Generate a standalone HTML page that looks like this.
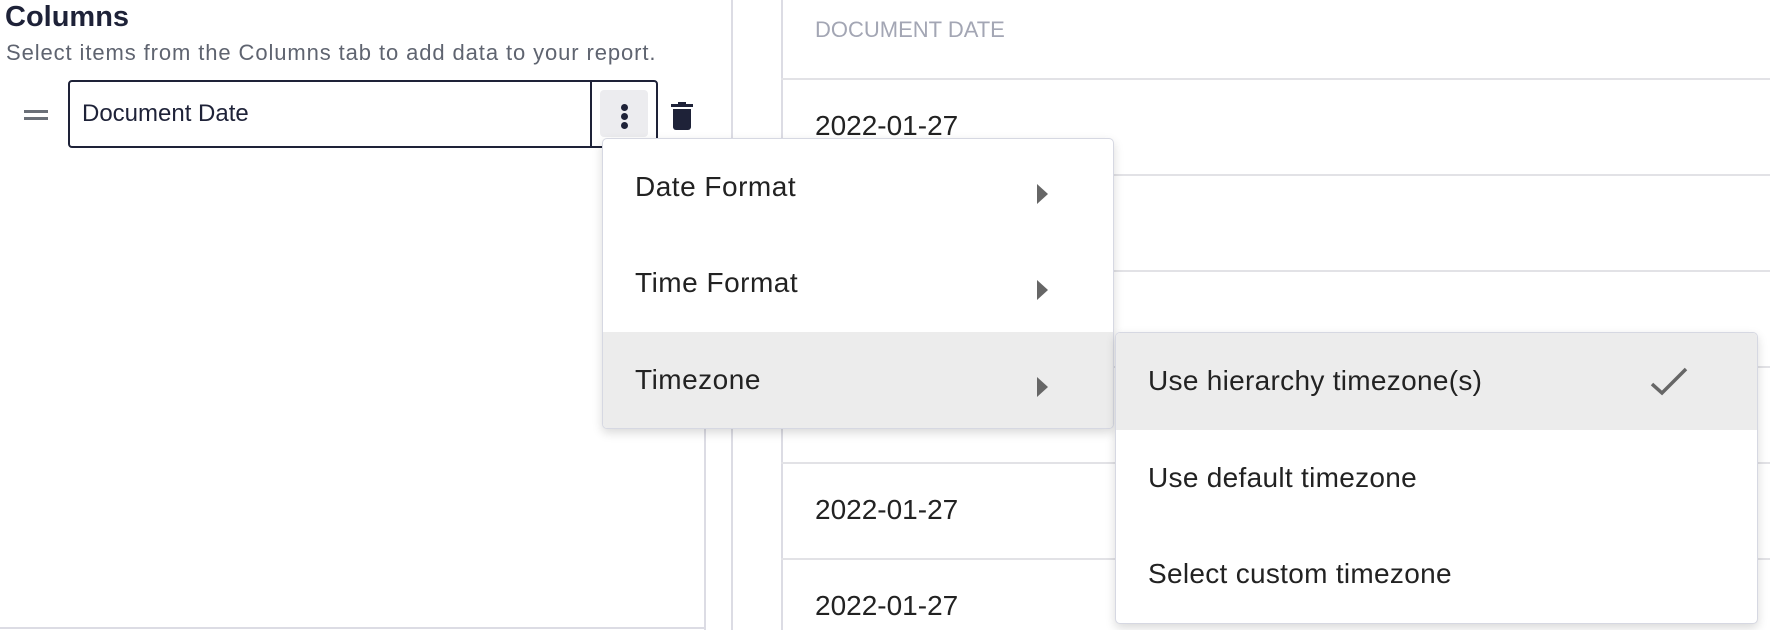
<!DOCTYPE html>
<html><head><meta charset="utf-8"><style>
*{box-sizing:border-box;margin:0;padding:0}
body{width:1770px;height:630px;overflow:hidden;background:#fff;font-family:"Liberation Sans",Arial,sans-serif;position:relative}
.a{position:absolute}
.hl{position:absolute;height:2px;background:#e2e2e6;left:781px;right:0}
.date{position:absolute;left:815px;font-size:28px;color:#222;line-height:30px}
.mi{position:absolute;left:0;right:0;height:96px;font-size:28px;color:#222;line-height:96px;padding-left:32px}
.arr{position:absolute;left:434px;top:45px;width:0;height:0;border-top:10px solid transparent;border-bottom:10px solid transparent;border-left:11px solid #666}
</style></head><body>
<div class="a" style="left:5px;top:-1px;font-size:29px;font-weight:bold;color:#1e2238;line-height:36px">Columns</div>
<div class="a" style="left:6px;top:40px;font-size:22px;color:#5f6470;line-height:26px;letter-spacing:0.9px">Select items from the Columns tab to add data to your report.</div>
<div class="a" style="left:24px;top:110px;width:24px;height:3px;background:#6b7078"></div>
<div class="a" style="left:24px;top:117px;width:24px;height:3px;background:#6b7078"></div>
<div class="a" style="left:68px;top:80px;width:590px;height:68px;border:2px solid #1e2238;border-radius:4px"></div>
<div class="a" style="left:82px;top:100px;font-size:24px;color:#1e2238;line-height:28px">Document Date</div>
<div class="a" style="left:590px;top:80px;width:2px;height:68px;background:#1e2238"></div>
<div class="a" style="left:600px;top:90px;width:48px;height:47px;background:#ececef;border-radius:4px"></div>
<div class="a" style="left:621px;top:104px;width:7px;height:7px;border-radius:50%;background:#1e2238"></div>
<div class="a" style="left:621px;top:113px;width:7px;height:7px;border-radius:50%;background:#1e2238"></div>
<div class="a" style="left:621px;top:122px;width:7px;height:7px;border-radius:50%;background:#1e2238"></div>
<svg class="a" style="left:670px;top:100px" width="24" height="32" viewBox="0 0 24 32"><rect x="1" y="4" width="22" height="3" fill="#1e2238"/><rect x="8" y="2" width="8" height="3" fill="#1e2238"/><path d="M3 9h18v18a3 3 0 0 1-3 3H6a3 3 0 0 1-3-3z" fill="#1e2238"/></svg>
<div class="a" style="left:704px;top:140px;width:2px;height:490px;background:#dcdce4"></div>
<div class="a" style="left:0;top:627px;width:706px;height:2px;background:#dcdce4"></div>
<div class="a" style="left:731px;top:0;width:2px;height:630px;background:#dcdce4"></div>
<div class="a" style="left:781px;top:0;width:2px;height:630px;background:#dcdce4"></div>
<div class="a" style="left:815px;top:18px;font-size:22px;color:#a3a6b4;line-height:24px">DOCUMENT DATE</div>
<div class="hl" style="top:78px"></div>
<div class="hl" style="top:174px"></div>
<div class="hl" style="top:270px"></div>
<div class="hl" style="top:366px"></div>
<div class="hl" style="top:462px"></div>
<div class="hl" style="top:558px"></div>
<div class="date" style="top:111px">2022-01-27</div>
<div class="date" style="top:495px">2022-01-27</div>
<div class="date" style="top:591px">2022-01-27</div>
<div class="a" style="left:602px;top:138px;width:512px;height:291px;background:#fff;border:1px solid #d6d8e2;border-radius:5px;box-shadow:0 4px 10px rgba(0,0,0,0.15);overflow:hidden">
<div class="mi" style="top:0;letter-spacing:0.5px">Date Format<div class="arr"></div></div>
<div class="mi" style="top:96px;letter-spacing:0.5px">Time Format<div class="arr"></div></div>
<div class="mi" style="top:193px;background:#ececec;height:98px;letter-spacing:0.5px">Timezone<div class="arr"></div></div>
</div>
<div class="a" style="left:1115px;top:332px;width:643px;height:292px;background:#fff;border:1px solid #d6d8e2;border-radius:5px;box-shadow:0 4px 10px rgba(0,0,0,0.15);overflow:hidden">
<div class="mi" style="top:0;background:#ececec;height:97px;letter-spacing:0.3px">Use hierarchy timezone(s)
<svg class="a" style="left:530px;top:32px" width="44" height="34" viewBox="0 0 44 34"><path d="M6 19 L16 28 L40 4" stroke="#666" stroke-width="3.5" fill="none"/></svg></div>
<div class="mi" style="top:97px;letter-spacing:0.3px">Use default timezone</div>
<div class="mi" style="top:193px;letter-spacing:0.3px">Select custom timezone</div>
</div>
</body></html>
